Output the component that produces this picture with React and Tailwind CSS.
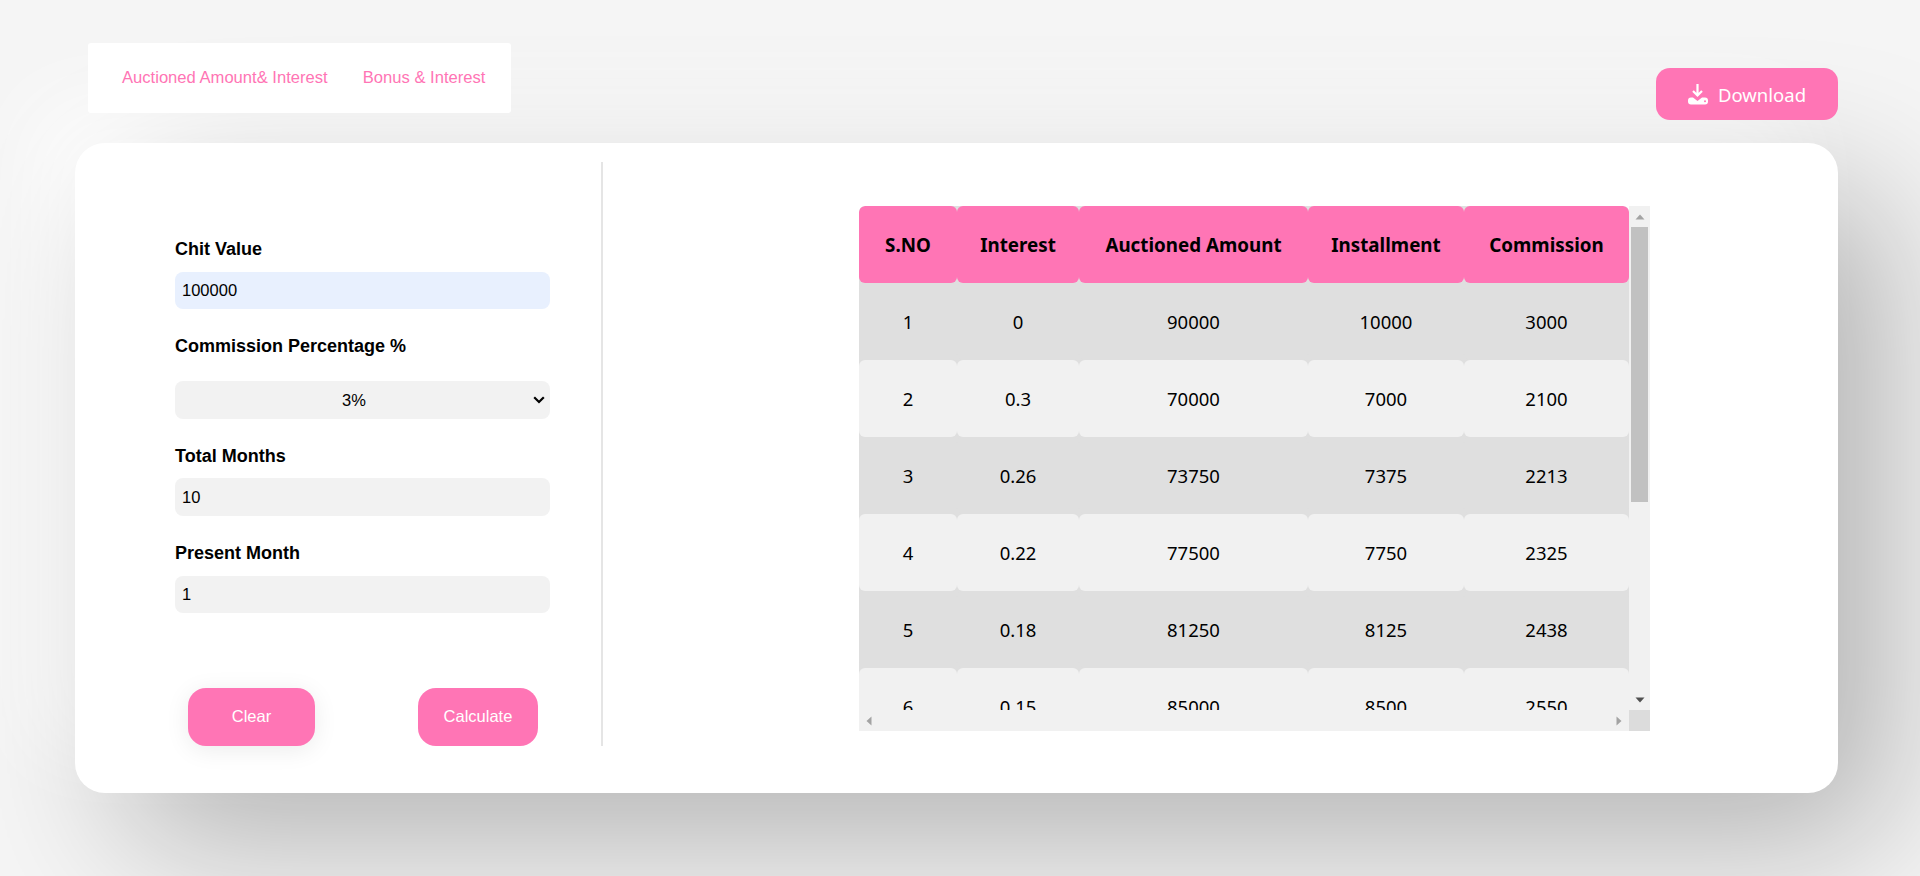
import React from 'react';

const rows = [
  { sno: 1, interest: '0', auctioned: 90000, installment: 10000, commission: 3000 },
  { sno: 2, interest: '0.3', auctioned: 70000, installment: 7000, commission: 2100 },
  { sno: 3, interest: '0.26', auctioned: 73750, installment: 7375, commission: 2213 },
  { sno: 4, interest: '0.22', auctioned: 77500, installment: 7750, commission: 2325 },
  { sno: 5, interest: '0.18', auctioned: 81250, installment: 8125, commission: 2438 },
  { sno: 6, interest: '0.15', auctioned: 85000, installment: 8500, commission: 2550 },
];

const headers = ['S.NO', 'Interest', 'Auctioned Amount', 'Installment', 'Commission'];

const DownloadIcon = () => (
  <svg width="20" height="21" viewBox="0 0 20 21" fill="none">
    <path d="M9.5 0v11M5 7l4.5 4.5L14 7" stroke="white" strokeWidth="2.2" />
    <path d="M3 13.5h2l4.5 3.6 4.5-3.6h3a3 3 0 0 1 3 3v1a3 3 0 0 1-3 3H3a3 3 0 0 1-3-3v-1a3 3 0 0 1 3-3z" fill="white" />
    <circle cx="17" cy="17.3" r="1" fill="#ff75b5" />
  </svg>
);

const Arrow = ({ d, fill }) => (
  <svg width="10" height="10" viewBox="0 0 10 10"><path d={d} fill={fill} /></svg>
);

const App = () => {
  return (
    <div className="h-screen overflow-hidden bg-[#f5f5f5] pl-[75px] pr-[82px] font-['Liberation_Sans',Arial,sans-serif] text-black">
      {/* Tabs + download */}
      <div className="flex h-[143px] items-start justify-between">
        <div className="ml-[13px] mt-[43px] flex h-[70px] w-[423px] items-center gap-[35px] rounded-[3px] bg-white pl-[34px] text-[16.6px] text-[#ff75b5]">
          <span>Auctioned Amount& Interest</span>
          <span>Bonus & Interest</span>
        </div>
        <button className="mt-[68px] flex h-[52px] w-[182px] items-center justify-center gap-[10px] rounded-[14px] bg-[#ff75b5] pt-[1px] font-['Noto_Sans',sans-serif] text-[18.5px] text-white">
          <DownloadIcon />
          Download
        </button>
      </div>

      {/* Main card */}
      <div className="flex h-[650px] rounded-[30px] bg-white shadow-[50px_50px_150px_rgba(0,0,0,0.27),-40px_-40px_80px_#ffffff]">
        {/* Form */}
        <div className="mb-[47px] mt-[19px] w-[528px] border-r-2 border-[#e5e5e5] pl-[100px] pr-[51px]">
          <label className="mt-[76px] block text-[18px] leading-[22px] font-bold">Chit Value</label>
          <input readOnly defaultValue="100000" className="mt-[12px] h-[37px] w-[375px] rounded-lg bg-[#e8f0fe] pl-[7px] text-[16.5px] outline-none" />
          <label className="mt-[26px] block text-[18px] leading-[22px] font-bold">Commission Percentage %</label>
          <div className="relative mt-[24px] h-[38px] w-[375px]">
            <select defaultValue="3" className="h-full w-full appearance-none rounded-lg bg-[#f2f2f2] pr-[17px] text-center text-[16.5px] outline-none">
              <option value="3">3%</option>
              <option value="5">5%</option>
            </select>
            <svg className="pointer-events-none absolute right-[5px] top-[15px]" width="12" height="8" viewBox="0 0 12 8" fill="none">
              <path d="M1.2 1.2 6 6l4.8-4.8" stroke="black" strokeWidth="2.2" />
            </svg>
          </div>
          <label className="mt-[26px] block text-[18px] leading-[22px] font-bold">Total Months</label>
          <input readOnly defaultValue="10" className="mt-[11px] h-[38px] w-[375px] rounded-lg bg-[#f2f2f2] pl-[7px] text-[16.5px] outline-none" />
          <label className="mt-[26px] block text-[18px] leading-[22px] font-bold">Present Month</label>
          <input readOnly defaultValue="1" className="mt-[12px] h-[37px] w-[375px] rounded-lg bg-[#f2f2f2] pl-[7px] text-[16.5px] outline-none" />
          <div className="mt-[75px] ml-[13px] flex w-[350px] justify-between">
            <button className="h-[58px] w-[127px] rounded-[18px] bg-[#ff75b5] pb-[2px] text-[16.5px] text-white shadow-[0_4px_24px_rgba(0,0,0,0.08)]">Clear</button>
            <button className="h-[58px] w-[120px] rounded-[18px] bg-[#ff75b5] pb-[2px] text-[16.5px] text-white">Calculate</button>
          </div>
        </div>

        {/* Table with scrollbars */}
        <div className="ml-[256px] mt-[63px] grid h-[525px] w-[791px] grid-cols-[770px_21px] grid-rows-[504px_21px]">
          <div className="overflow-hidden">
            <table className="w-[770px] table-fixed border-separate border-spacing-0 overflow-hidden rounded-t-md bg-[#dfdfdf] text-center font-['Noto_Sans',sans-serif] text-[18.5px]">
              <colgroup>
                <col className="w-[98px]" />
                <col className="w-[122px]" />
                <col className="w-[229px]" />
                <col className="w-[156px]" />
                <col className="w-[165px]" />
              </colgroup>
              <thead>
                <tr>
                  {headers.map((h) => (
                    <th key={h} className="h-[77px] rounded-md bg-[#ff75b5] p-0 pt-[2px] text-[18.8px] font-bold">{h}</th>
                  ))}
                </tr>
              </thead>
              <tbody>
                {rows.map((row, idx) => (
                  <tr key={row.sno}>
                    {[row.sno, row.interest, row.auctioned, row.installment, row.commission].map((v, i) => (
                      <td key={i} className={`h-[77px] rounded-md p-0 pt-[1px] ${idx % 2 === 1 ? 'bg-[#f1f1f1]' : 'bg-[#dfdfdf]'}`}>{v}</td>
                    ))}
                  </tr>
                ))}
              </tbody>
            </table>
          </div>

          {/* Vertical scrollbar */}
          <div className="flex flex-col items-center bg-[#f1f1f1]">
            <div className="flex h-[21px] items-center justify-center"><Arrow d="M5 2.5 9.5 7.5H.5z" fill="#a3a3a3" /></div>
            <div className="h-[275px] w-[17px] bg-[#c1c1c1]" />
            <div className="mt-auto flex h-[21px] items-center justify-center"><Arrow d="M.5 2.5h9L5 7.5z" fill="#505050" /></div>
          </div>

          {/* Horizontal scrollbar */}
          <div className="flex items-center justify-between bg-[#f1f1f1] px-[5px]">
            <Arrow d="M7.5.5v9L2.5 5z" fill="#a3a3a3" />
            <Arrow d="M2.5.5v9L7.5 5z" fill="#a3a3a3" />
          </div>
          <div className="bg-[#dcdcdc]" />
        </div>
      </div>
    </div>
  );
};

export default App;
